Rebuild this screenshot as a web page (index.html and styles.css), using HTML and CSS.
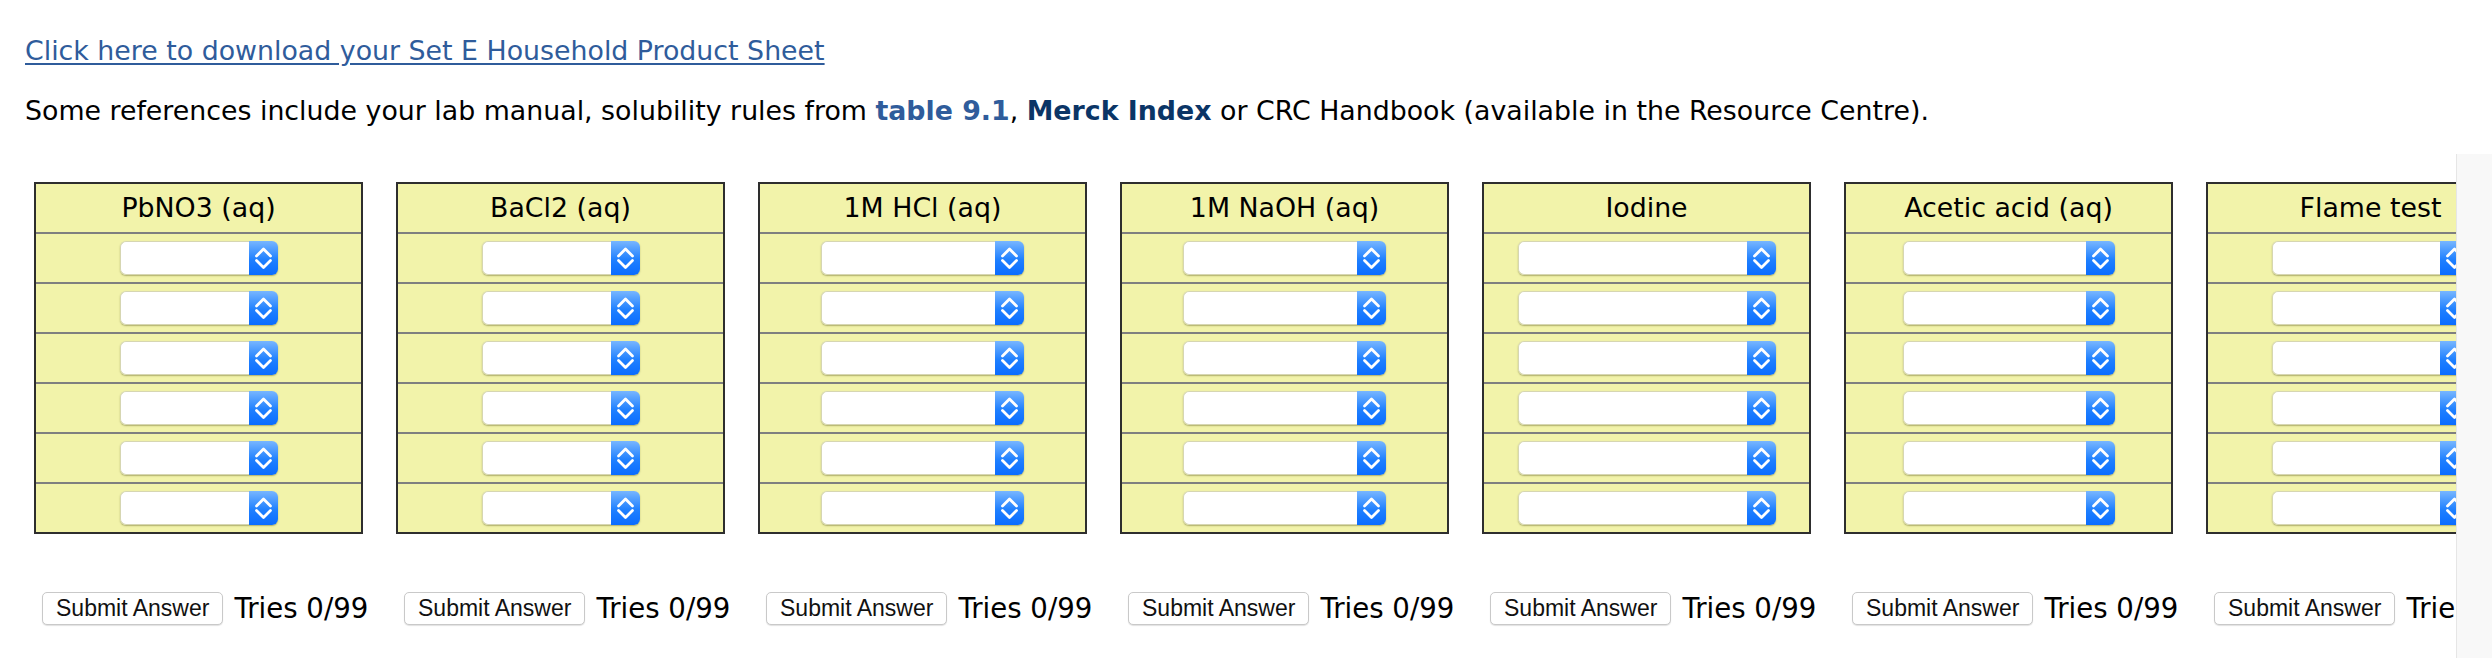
FILE: index.html
```html
<!DOCTYPE html>
<html lang="en">
<head>
<meta charset="utf-8">
<title>Household Product Sheet</title>
<link rel="stylesheet" href="styles.css">
</head>
<body>
<div class="intro">
  <p class="link-line"><a class="dl" href="#">Click here to download your Set E Household Product Sheet</a></p>
  <p class="refs">Some references include your lab manual, solubility rules from <b class="t91">table 9.1</b>, <b class="merck">Merck Index</b> or CRC Handbook (available in the Resource Centre).</p>
</div>

<div class="scroller">
  <div class="scroll-content">
    <div class="cols" id="cols"></div>
  </div>
  <div class="track"></div>
</div>

<script>
  var cols = [
    ["PbNO3 (aq)", 158],
    ["BaCl2 (aq)", 158],
    ["1M HCl (aq)", 203],
    ["1M NaOH (aq)", 203],
    ["Iodine", 258],
    ["Acetic acid (aq)", 212],
    ["Flame test", 197]
  ];
  var chev = '<svg class="chev" viewBox="0 0 29 34" width="29" height="34"><polyline points="7.5,15 14.5,8 21.5,15" fill="none" stroke="#fff" stroke-width="2.8" stroke-linecap="round" stroke-linejoin="round"/><polyline points="7.5,19.5 14.5,26.5 21.5,19.5" fill="none" stroke="#fff" stroke-width="2.8" stroke-linecap="round" stroke-linejoin="round"/></svg>';
  var html = "";
  cols.forEach(function (c) {
    html += '<div class="col"><div class="tbl"><div class="hd">' + c[0] + '</div>';
    for (var i = 0; i < 6; i++) {
      html += '<div class="row"><span class="sel" style="width:' + c[1] + 'px"><span class="sel-box"></span><span class="sel-btn">' + chev + '</span></span></div>';
    }
    html += '</div><div class="actions"><button class="submit" type="button">Submit Answer</button><span class="tries">Tries 0/99</span></div></div>';
  });
  document.getElementById("cols").innerHTML = html;
</script>
</body>
</html>
```

FILE: styles.css
```css
html, body {
  margin: 0;
  padding: 0;
  background: #fff;
}
body {
  font-family: "DejaVu Sans", Verdana, sans-serif;
  font-size: 26.8px;
  color: #000;
  width: 2492px;
  height: 658px;
  overflow: hidden;
}
.intro {
  padding-left: 25px;
}
.link-line {
  margin: 35px 0 0;
  line-height: 32px;
}
.dl {
  color: #2f5c9b;
  text-decoration: underline;
  text-underline-offset: 3px;
}
.refs {
  margin: 28px 0 0;
  line-height: 32px;
  white-space: nowrap;
}
.t91 {
  color: #2f5c9b;
}
.merck {
  color: #0b3566;
}
.scroller {
  margin-top: 27px;
  display: flex;
  height: 504px;
}
.scroll-content {
  flex: 1;
  overflow: hidden;
  padding: 28px 0 0 34px;
}
.track {
  width: 35px;
  flex-shrink: 0;
  background: #f8f8f8;
  border-left: 1px solid #e6e6e6;
}
.cols {
  display: flex;
  gap: 33px;
}
.col {
  flex-shrink: 0;
  width: 329px;
}
.tbl {
  box-sizing: border-box;
  width: 329px;
  border: 2px solid #2e2e2e;
  background: #f2f3aa;
}
.hd {
  height: 48px;
  display: flex;
  align-items: center;
  justify-content: center;
  padding-bottom: 2px;
  box-sizing: border-box;
}
.row {
  height: 48px;
  border-top: 2px solid #7f7f7f;
  display: flex;
  align-items: center;
  justify-content: center;
}
.sel {
  display: flex;
  height: 34px;
  border-radius: 6px;
  box-shadow: 0 1px 1.5px rgba(90, 90, 30, 0.45);
}
.sel-box {
  flex: 1;
  background: #fff;
  border: 1px solid #d6d6b2;
  border-right: none;
  border-radius: 6px 0 0 6px;
}
.sel-btn {
  width: 29px;
  flex-shrink: 0;
  background: linear-gradient(#78b6ff, #1f80ff 55%, #0a6cff);
  border-radius: 0 6px 6px 0;
  display: flex;
}
.chev {
  display: block;
}
.actions {
  margin-top: 58px;
  padding-left: 8px;
  display: flex;
  align-items: center;
  white-space: nowrap;
}
.submit {
  font-family: "Liberation Sans", Arial, sans-serif;
  font-size: 23px;
  color: #111;
  height: 33px;
  padding: 0 13px;
  background: #fff;
  border: 1px solid #c9c9c9;
  border-radius: 5px;
  box-shadow: 0 1px 1px rgba(0, 0, 0, 0.12);
}
.tries {
  margin-left: 11px;
  font-size: 27.6px;
}
```
